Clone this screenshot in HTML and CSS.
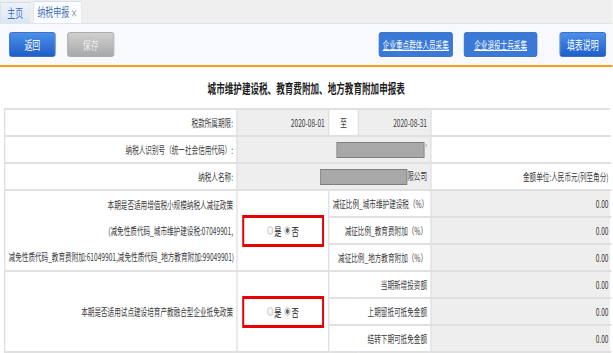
FILE: index.html
```html
<!DOCTYPE html>
<html lang="zh-CN">
<head>
<meta charset="utf-8">
<title>纳税申报</title>
<link rel="stylesheet" href="styles.css">
</head>
<body>
<div class="page">
  <div class="tabbar">
    <div class="tab tab-home">主页</div>
    <div class="tab tab-active">纳税申报 <span class="tab-close">×</span></div>
  </div>
  <div class="toolbar">
    <div class="group">
      <button class="btn btn-blue btn-back">返回</button>
      <button class="btn btn-gray">保存</button>
    </div>
    <div class="group">
      <button class="btn btn-flat btn-wide1"><u>企业重点群体人员采集</u></button>
      <button class="btn btn-flat btn-wide2"><u>企业退役士兵采集</u></button>
      <button class="btn btn-blue btn-help">填表说明</button>
    </div>
  </div>
  <div class="orange"></div>
  <h1 class="title">城市维护建设税、教育费附加、地方教育附加申报表</h1>
  <table class="form">
    <colgroup>
      <col class="c1"><col class="c2"><col class="c3"><col class="c4"><col class="c5">
    </colgroup>
    <tr>
      <td class="label">税款所属期限:</td>
      <td class="gray num">2020-08-01</td>
      <td class="center">至</td>
      <td class="gray num">2020-08-31</td>
      <td></td>
    </tr>
    <tr>
      <td class="label">纳税人识别号（统一社会信用代码）:</td>
      <td class="gray num" colspan="3"><span class="redact r1"></span><span class="tick">'</span></td>
      <td></td>
    </tr>
    <tr>
      <td class="label">纳税人名称:</td>
      <td class="gray num" colspan="3"><span class="redact r2"></span>限公司</td>
      <td class="label">金额单位:人民币元(列至角分)</td>
    </tr>
    <tr>
      <td class="label multi" rowspan="3">
        <div>本期是否适用增值税小规模纳税人减征政策</div>
        <div>(减免性质代码_城市维护建设税:07049901,</div>
        <div>减免性质代码_教育费附加:61049901,减免性质代码_地方教育附加:99049901)</div>
      </td>
      <td class="radio-cell" rowspan="3">
        <div class="redbox">
          <span class="radio"></span><span class="rtext">是</span>
          <span class="radio checked"></span><span class="rtext">否</span>
        </div>
      </td>
      <td class="label" colspan="2">减征比例_城市维护建设税（%）</td>
      <td class="gray num">0.00</td>
    </tr>
    <tr>
      <td class="label" colspan="2">减征比例_教育费附加（%）</td>
      <td class="gray num">0.00</td>
    </tr>
    <tr>
      <td class="label" colspan="2">减征比例_地方教育附加（%）</td>
      <td class="gray num">0.00</td>
    </tr>
    <tr>
      <td class="label" rowspan="3">本期是否适用试点建设培育产教融合型企业抵免政策</td>
      <td class="radio-cell" rowspan="3">
        <div class="redbox">
          <span class="radio"></span><span class="rtext">是</span>
          <span class="radio checked"></span><span class="rtext">否</span>
        </div>
      </td>
      <td class="label" colspan="2">当期新增投资额</td>
      <td class="gray num">0.00</td>
    </tr>
    <tr>
      <td class="label" colspan="2">上期留抵可抵免金额</td>
      <td class="gray num">0.00</td>
    </tr>
    <tr>
      <td class="label" colspan="2">结转下期可抵免金额</td>
      <td class="gray num">0.00</td>
    </tr>
  </table>
</div>
</body>
</html>
```
FILE: styles.css
```css
html, body {
  margin: 0;
  padding: 0;
  background: #ffffff;
  overflow: hidden;
}
body {
  font-family: "Noto Sans CJK SC", "Noto Sans", sans-serif;
  color: #333;
}
.page {
  width: 928px;
  transform: scaleX(0.66);
  transform-origin: 0 0;
}

/* tabs */
.tabbar {
  height: 24px;
  box-sizing: border-box;
  background: #efefef;
  border-bottom: 1px solid #dfe5ee;
  display: flex;
  align-items: flex-end;
}
.tab {
  height: 21px;
  box-sizing: border-box;
  line-height: 20px;
  font-size: 12px;
  color: #3f70b8;
  text-align: center;
  border: 1px solid #d3dce8;
  border-bottom: none;
  border-radius: 2px 2px 0 0;
}
.tab-home {
  width: 46px;
  background: linear-gradient(#eef3fa, #dbe6f4);
}
.tab-active {
  width: 74px;
  margin-left: 4px;
  background: #fbfcff;
  height: 22px;
}
.tab-close {
  font-size: 10px;
  color: #777;
}

/* toolbar */
.toolbar {
  height: 41px;
  box-sizing: border-box;
  background: #f7f9fd;
  display: flex;
  align-items: center;
  justify-content: space-between;
  padding: 0 10px 0 14px;
}
.group {
  display: flex;
  align-items: center;
}
.btn {
  height: 25px;
  box-sizing: border-box;
  border-radius: 3px;
  font-family: inherit;
  padding: 0;
  color: #fff;
  cursor: pointer;
}
.btn-blue {
  background: linear-gradient(#4c90ea, #1d5ec8);
  border: 1px solid #1b56b4;
  font-size: 12px;
  width: 70px;
}
.btn-gray {
  background: linear-gradient(#cfcfcf, #a9a9a9);
  border: 1px solid #9c9c9c;
  color: #ececec;
  font-size: 12px;
  width: 71px;
  margin-left: 18px;
}
.btn-flat {
  background: #3a79d6;
  border: 1px solid #2d68c2;
  font-size: 10px;
}
.btn-wide1 {
  width: 112px;
}
.btn-wide2 {
  width: 111px;
  margin-left: 17px;
}
.btn-help {
  margin-left: 34px;
}

.orange {
  height: 2px;
  background: #fb9d18;
}

.title {
  margin: 0;
  height: 41px;
  line-height: 41px;
  text-align: center;
  font-size: 13px;
  font-weight: bold;
  color: #1e1e1e;
}

/* table */
.form {
  margin-left: 6px;
  width: 918px;
  table-layout: fixed;
  border-collapse: collapse;
  font-size: 10px;
  color: #3a3a3a;
}
.c1 { width: 352px; }
.c2 { width: 139px; }
.c3 { width: 45px; }
.c4 { width: 110px; }
.c5 { width: 272px; }
.form td {
  border: 2px solid #e0e0e0;
  height: 25px;
  padding: 0 5px;
  white-space: nowrap;
  vertical-align: middle;
}
.form td:last-child {
  border-right-color: #ffffff;
  padding-right: 2px;
}
.label {
  text-align: right;
}
.num {
  text-align: right;
}
.center {
  text-align: center;
}
.gray {
  background: #eeeeee;
}
.multi div {
  line-height: 26px;
}
.redact {
  display: inline-block;
  vertical-align: middle;
  height: 16px;
  box-sizing: border-box;
  background: #a8a8a8;
  border: 1px solid #7e7e7e;
}
.r1 { width: 133px; }
.r2 { width: 132px; }
.tick {
  color: #777;
  margin-left: 1px;
}
.radio-cell {
  text-align: center;
}
.redbox {
  width: 124px;
  height: 32px;
  box-sizing: border-box;
  margin: 0 auto;
  border: 3px solid #e60000;
  display: flex;
  align-items: center;
  justify-content: center;
  font-size: 11px;
  color: #222;
}
.radio {
  width: 9px;
  height: 9px;
  box-sizing: border-box;
  border-radius: 50%;
  border: 1px solid #c4c4c4;
  background: radial-gradient(circle at 40% 35%, #ffffff, #e2e2e2);
  margin-right: 2px;
}
.radio.checked {
  margin-left: 4px;
  background: radial-gradient(circle, #666 0 2px, #e6e6e6 2.5px);
}
.rtext {
  line-height: 14px;
}
```
